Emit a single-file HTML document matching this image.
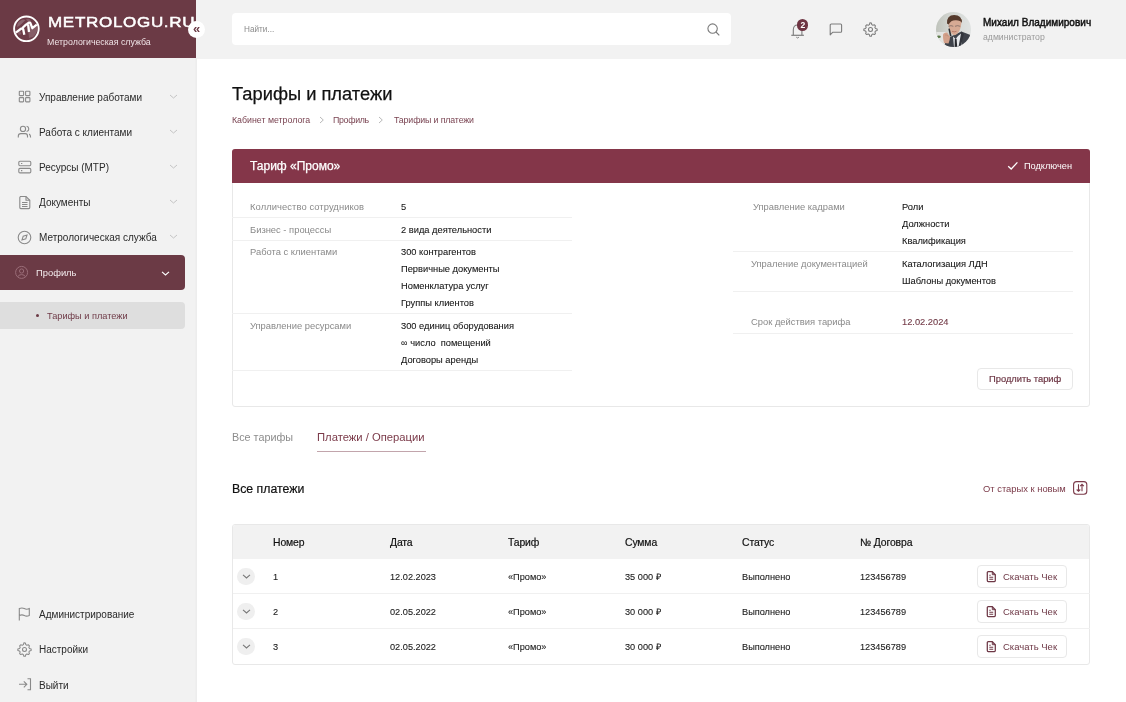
<!DOCTYPE html>
<html><head><meta charset="utf-8">
<style>
*{margin:0;padding:0;box-sizing:border-box}
html,body{width:1126px;height:702px;overflow:hidden;background:#fff;font-family:"Liberation Sans",sans-serif;color:#1c1c1c}
.a{position:absolute}
.t{position:absolute;white-space:nowrap;line-height:20px;height:20px;will-change:transform}
svg{position:absolute;overflow:visible}
#sb{left:0;top:0;width:196.5px;height:702px;background:#f2f2f2}
#sbh{left:0;top:0;width:196.4px;height:58.3px;background:#6b3a45}
#tb{left:196.4px;top:0;width:930px;height:58.6px;background:#f2f2f2}
.nav{font-size:10px;color:#2a2a2a}
.lbl{font-size:9.4px;color:#8a8a8a}
.val{font-size:9.3px;color:#141414;-webkit-text-stroke:0.08px #141414}
.sep{position:absolute;height:1px;background:#f0f0f0}
.th{font-size:10.4px;color:#111;-webkit-text-stroke:0.2px #111;letter-spacing:-0.12px}
.td{font-size:9.2px;color:#1a1a1a;-webkit-text-stroke:0.1px #1a1a1a}
.btn{position:absolute;border:1px solid #e8e8e8;border-radius:4px;background:#fff}
.mar{color:#7b3a49}
</style></head><body>
<div id="sb" class="a"></div>
<div id="sbh" class="a"></div>
<div id="tb" class="a"></div>
<!-- sidebar edge -->
<div class="a" style="left:194.5px;top:58.3px;width:2px;height:644px;background:linear-gradient(90deg,#f0f0f0,#ececec)"></div>

<!-- logo -->
<svg style="left:10px;top:13px" width="32" height="32" viewBox="0 0 32 32">
  <circle cx="16.4" cy="15.85" r="12.3" fill="#6d3c48" stroke="#fff" stroke-width="1.9"/>
  <path d="M7.5 11 Q9 7.5 13 6.5 L15.5 7 L12 10.5 L9 13 L7 14 Z" fill="#a08089" opacity=".6"/>
  <path d="M16 6 L19 5.8 L21 8 L18 9 Z" fill="#a08089" opacity=".45"/>
  <path d="M18 14 L20.5 13.5 L22.5 16 L26.5 13 L27.5 15 Q27 21 23 24 L19 25 L18.5 20 Z" fill="#9a7882" opacity=".55"/>
  <path d="M7 19.5 L10 18 L11.5 21 L9 22 Z" fill="#9a7882" opacity=".5"/>
  <path d="M5.8 19.6 L11 15.8 Q12.6 14.6 13.2 16.2 L14.3 21.8 M12.4 15 L16 11.6 Q17.6 10.4 18.2 12 L19 19 M17 11 L18.6 9.8 Q20 9 20.6 10.6 L22.3 15.2 L26.8 11.6" fill="none" stroke="#fff" stroke-width="2.3" stroke-linejoin="round"/>
</svg>
<div class="t" style="left:47.8px;top:12.2px;font-size:15px;color:#fff;-webkit-text-stroke:0.5px #fff;letter-spacing:0.6px;transform:scaleX(1.135);transform-origin:0 0">METROLOGU.RU</div>
<div class="t" style="left:47px;top:31.9px;font-size:8.8px;color:#efe3e6">Метрологическая служба</div>
<!-- collapse button -->
<div class="a" style="left:188px;top:21px;width:17px;height:17px;border-radius:50%;background:#fff"></div>
<div class="t" style="left:192.6px;top:18.6px;font-size:13px;font-weight:bold;color:#6b3a45;line-height:20px">«</div>

<!-- search -->
<div class="a" style="left:232px;top:13px;width:499px;height:32px;background:#fff;border-radius:4px"></div>
<div class="t" style="left:244px;top:20.1px;font-size:8.2px;color:#8c8c8c">Найти...</div>
<svg style="left:707px;top:23px" width="13" height="13" viewBox="0 0 13 13"><circle cx="5.6" cy="5.6" r="4.7" fill="none" stroke="#7a7a7a" stroke-width="1.1"/><path d="M9 9 L12.3 12.3" stroke="#7a7a7a" stroke-width="1.1"/></svg>

<!-- top icons -->
<svg style="left:790px;top:20px" width="16" height="20" viewBox="0 0 16 20">
  <path d="M3.3 15 V10 Q3.3 5 7.6 5 Q11.9 5 11.9 10 V15" fill="none" stroke="#7c7c7c" stroke-width="1.1"/>
  <path d="M1.3 15.3 H13.9" stroke="#7c7c7c" stroke-width="1.2"/>
  <path d="M6.3 17.2 L7.6 18 L8.9 17.2" fill="none" stroke="#7c7c7c" stroke-width="1"/>
</svg>
<div class="a" style="left:796.7px;top:19px;width:11.6px;height:11.6px;border-radius:50%;background:#6e3543"></div>
<div class="t" style="left:796.7px;top:14.8px;width:11.6px;text-align:center;font-size:8.6px;font-weight:bold;color:#fff">2</div>
<svg style="left:829px;top:23px" width="14" height="14" viewBox="0 0 14 14">
  <path d="M1.2 11.8 V2.2 Q1.2 1 2.4 1 H11.6 Q12.6 1 12.6 2.2 V8.2 Q12.6 9.3 11.6 9.3 H3.6 Z" fill="none" stroke="#7c7c7c" stroke-width="1.1" stroke-linejoin="round"/>
</svg>
<svg style="left:862.5px;top:21.5px" width="15" height="15" viewBox="0 0 24 24">
  <path d="M12 1.8 L14.2 2.2 L14.9 4.9 L16.6 5.9 L19.2 5.1 L20.7 6.8 L19.9 9.4 L20.9 11.1 L23.5 11.8 L23.5 14.2 L20.9 14.9 L19.9 16.6 L20.7 19.2 L19.2 20.7 L16.6 19.9 L14.9 20.9 L14.2 23.5 L11.8 23.5 L11.1 20.9 L9.4 19.9 L6.8 20.7 L5.1 19.2 L5.9 16.6 L4.9 14.9 L2.2 14.2 L2.2 11.8 L4.9 11.1 L5.9 9.4 L5.1 6.8 L6.8 5.1 L9.4 5.9 L11.1 4.9 Z" transform="translate(-0.85,-0.65)" fill="none" stroke="#7c7c7c" stroke-width="1.7" stroke-linejoin="round"/>
  <circle cx="12" cy="12" r="3.2" fill="none" stroke="#7c7c7c" stroke-width="1.7"/>
</svg>

<!-- avatar -->
<svg style="left:936px;top:11.7px" width="35" height="35" viewBox="0 0 35 35">
  <defs><clipPath id="av"><circle cx="17.5" cy="17.5" r="17.5"/></clipPath>
  <linearGradient id="avbg" x1="0" y1="0" x2="1" y2="0"><stop offset="0" stop-color="#bfc3bb"/><stop offset=".4" stop-color="#d3d6d2"/><stop offset="1" stop-color="#dfe2e1"/></linearGradient></defs>
  <g clip-path="url(#av)">
    <rect width="35" height="35" fill="url(#avbg)"/>
    <rect x="0" y="20" width="11" height="15" fill="#e4e5e3"/>
    <ellipse cx="2.8" cy="24.8" rx="2" ry="1.2" fill="#5d7a4a"/>
    <path d="M8 35 L10 27.5 L16.5 23.8 L25.4 19.5 L34.5 23 L35 35 Z" fill="#3e424a"/>
    <path d="M17 24.5 L19.6 27 L22 24 L25.2 21.5 L25.5 35 L18 35 Z" fill="#e7e9ec"/>
    <path d="M18.8 26.8 L20.6 26.8 L21.2 35 L18.6 35 Z" fill="#25272c"/>
    <path d="M25.4 19.5 L28 22 L24.5 35 L22.5 35 Z" fill="#33363d"/>
    <path d="M12.3 7 Q12 21.5 18.2 23.2 Q25.2 22 25.6 7 Z" fill="#d6aa94"/>
    <path d="M12.5 14.3 Q15 13 17.3 14.3 M19 14.3 Q21.5 13 24.2 14.3" stroke="#6e5f5b" stroke-width=".7" fill="none"/>
    <path d="M16 19.3 Q18.3 20.4 20.5 19.3" stroke="#b0705f" stroke-width=".8" fill="none"/>
    <path d="M11 11.5 Q10.5 3.2 18.2 3 Q26 3 26 11 Q24.5 8.3 20 8.2 Q15 7.8 12.6 12.6 Z" fill="#553a2c"/>
    <path d="M8 31 Q6.5 25 7.2 22 Q8.5 20 11 20.5 L14 24.8 Q14 28.5 12.5 31.5 Z" fill="#d3a18b"/><path d="M9 23 Q11 22.5 12.5 24.5" stroke="#b88570" stroke-width=".6" fill="none"/>
    <path d="M12.3 16.8 L13.8 16.5 L15.6 24 L14 24.5 Z" fill="#2f3034"/>
  </g>
</svg>
<div class="t" style="left:983px;top:13.3px;font-size:10px;color:#111;-webkit-text-stroke:0.45px #111;letter-spacing:0.02px">Михаил Владимирович</div>
<div class="t" style="left:983px;top:26.5px;font-size:8.7px;color:#9a9a9a">администратор</div>

<!-- sidebar nav -->
<svg style="left:18px;top:90px" width="14" height="14" viewBox="0 0 14 14" fill="none" stroke="#8a8a8a" stroke-width="1.1">
  <rect x="1.3" y="1.3" width="4.3" height="4.3" rx=".6"/><rect x="7.6" y="1.3" width="4.3" height="4.3" rx=".6"/>
  <rect x="1.3" y="7.6" width="4.3" height="4.3" rx=".6"/><rect x="7.6" y="7.6" width="4.3" height="4.3" rx=".6"/>
</svg>
<div class="t nav" style="left:39px;top:87.7px">Управление работами</div>
<svg style="left:17px;top:125px" width="16" height="14" viewBox="0 0 16 14" fill="none" stroke="#8a8a8a" stroke-width="1.1">
  <circle cx="6" cy="3.9" r="2.6"/><path d="M1.3 12.6 V11 Q1.3 8.6 3.8 8.6 H8.3 Q10.5 8.6 10.5 11 V12.6"/>
  <path d="M9.6 1.3 Q11.8 1.8 11.8 3.9 Q11.8 6 9.6 6.5"/><path d="M12.2 9 Q13.6 10 13.6 12.6"/>
</svg>
<div class="t nav" style="left:39px;top:122.7px">Работа с клиентами</div>
<svg style="left:18px;top:160px" width="14" height="15" viewBox="0 0 14 15" fill="none" stroke="#8a8a8a" stroke-width="1.1">
  <rect x="0.8" y="1.3" width="12" height="4.5" rx="1.2"/><rect x="0.8" y="8.4" width="12" height="4.5" rx="1.2"/>
  <path d="M3 3.5 H4.3 M3 10.6 H4.3"/>
</svg>
<div class="t nav" style="left:39px;top:157.7px">Ресурсы (МТР)</div>
<svg style="left:18px;top:195px" width="14" height="15" viewBox="0 0 14 15" fill="none" stroke="#8a8a8a" stroke-width="1.1">
  <path d="M2 1.5 H8 L11.8 5.3 V12.6 Q11.8 13.6 10.8 13.6 H2.8 Q1.8 13.6 1.8 12.6 V2.5 Q1.8 1.5 2.8 1.5 Z"/>
  <path d="M8 1.5 V5.3 H11.8"/><path d="M4 7.5 H9.5 M4 9.5 H9.5 M4 11.5 H9.5"/>
</svg>
<div class="t nav" style="left:39px;top:192.7px">Документы</div>
<svg style="left:17px;top:230px" width="15" height="15" viewBox="0 0 15 15" fill="none" stroke="#8a8a8a" stroke-width="1.1">
  <circle cx="7.5" cy="7.5" r="6.3"/><path d="M10 5 L8.8 8.8 L5 10 L6.2 6.2 Z"/>
</svg>
<div class="t nav" style="left:39px;top:227.7px">Метрологическая служба</div>
<!-- chevrons -->
<svg style="left:169px;top:94px" width="9" height="5" viewBox="0 0 9 5"><path d="M1 1 L4.5 4 L8 1" fill="none" stroke="#c4c4c4" stroke-width="1"/></svg>
<svg style="left:169px;top:129px" width="9" height="5" viewBox="0 0 9 5"><path d="M1 1 L4.5 4 L8 1" fill="none" stroke="#c4c4c4" stroke-width="1"/></svg>
<svg style="left:169px;top:164px" width="9" height="5" viewBox="0 0 9 5"><path d="M1 1 L4.5 4 L8 1" fill="none" stroke="#c4c4c4" stroke-width="1"/></svg>
<svg style="left:169px;top:199px" width="9" height="5" viewBox="0 0 9 5"><path d="M1 1 L4.5 4 L8 1" fill="none" stroke="#c4c4c4" stroke-width="1"/></svg>
<svg style="left:169px;top:234px" width="9" height="5" viewBox="0 0 9 5"><path d="M1 1 L4.5 4 L8 1" fill="none" stroke="#c4c4c4" stroke-width="1"/></svg>

<!-- profile active -->
<div class="a" style="left:0;top:255px;width:185px;height:35px;background:#6b3a45;border-radius:0 4px 4px 0"></div>
<svg style="left:15px;top:266px" width="14" height="14" viewBox="0 0 14 14" fill="none" stroke="#9a6d78" stroke-width="1">
  <circle cx="6.6" cy="6.4" r="6"/><circle cx="6.6" cy="5" r="2.1"/><path d="M2.8 10.8 Q3.5 8.6 6.6 8.6 Q9.7 8.6 10.4 10.8"/>
</svg>
<div class="t" style="left:36px;top:263px;font-size:9.4px;color:#f3ecee">Профиль</div>
<svg style="left:161px;top:270.5px" width="9" height="5" viewBox="0 0 9 5"><path d="M1 0.8 L4.5 4 L8 0.8" fill="none" stroke="#fff" stroke-width="1.1"/></svg>
<!-- sub item -->
<div class="a" style="left:0;top:302px;width:185px;height:27px;background:#dedede;border-radius:0 4px 4px 0"></div>
<div class="a" style="left:35.5px;top:314.3px;width:3px;height:3px;border-radius:50%;background:#6b3a45"></div>
<div class="t mar" style="left:47px;top:305.7px;font-size:9.2px;color:#6f3b48">Тарифы и платежи</div>

<!-- bottom nav -->
<svg style="left:18px;top:607px" width="14" height="15" viewBox="0 0 14 15" fill="none" stroke="#8a8a8a" stroke-width="1.1">
  <path d="M1.3 13.5 V1.6 Q4 0.4 6.3 1.6 Q8.6 2.8 11.3 1.6 V8.5 Q8.6 9.7 6.3 8.5 Q4 7.3 1.3 8.5"/>
</svg>
<div class="t nav" style="left:38.7px;top:605.2px">Администрирование</div>
<svg style="left:17px;top:641.5px" width="15" height="15" viewBox="0 0 24 24">
  <path d="M12 1.8 L14.2 2.2 L14.9 4.9 L16.6 5.9 L19.2 5.1 L20.7 6.8 L19.9 9.4 L20.9 11.1 L23.5 11.8 L23.5 14.2 L20.9 14.9 L19.9 16.6 L20.7 19.2 L19.2 20.7 L16.6 19.9 L14.9 20.9 L14.2 23.5 L11.8 23.5 L11.1 20.9 L9.4 19.9 L6.8 20.7 L5.1 19.2 L5.9 16.6 L4.9 14.9 L2.2 14.2 L2.2 11.8 L4.9 11.1 L5.9 9.4 L5.1 6.8 L6.8 5.1 L9.4 5.9 L11.1 4.9 Z" transform="translate(-0.85,-0.65)" fill="none" stroke="#8a8a8a" stroke-width="1.7" stroke-linejoin="round"/>
  <circle cx="12" cy="12" r="3.2" fill="none" stroke="#8a8a8a" stroke-width="1.7"/>
</svg>
<div class="t nav" style="left:38.7px;top:640.2px">Настройки</div>
<svg style="left:18px;top:678px" width="14" height="13" viewBox="0 0 14 13" fill="none" stroke="#8a8a8a" stroke-width="1.1">
  <path d="M1 6.3 H8.5 M5.8 3.3 L8.8 6.3 L5.8 9.3"/><path d="M9.5 0.8 H12.5 V11.8 H9.5"/>
</svg>
<div class="t nav" style="left:38.7px;top:675.8px">Выйти</div>

<!-- MAIN -->
<div class="t" style="left:231.5px;top:83.8px;font-size:18.3px;color:#111;-webkit-text-stroke:0.25px #111">Тарифы и платежи</div>
<div class="t" style="left:231.5px;top:109.8px;font-size:8.8px;color:#7a4452">Кабинет метролога</div>
<svg style="left:319px;top:116px" width="6" height="8" viewBox="0 0 6 8"><path d="M1 1 L4.3 4 L1 7" fill="none" stroke="#b0b0b0" stroke-width="0.9"/></svg>
<div class="t" style="left:333px;top:109.8px;font-size:8.8px;color:#7a4452;letter-spacing:-0.3px">Профиль</div>
<svg style="left:378px;top:116px" width="6" height="8" viewBox="0 0 6 8"><path d="M1 1 L4.3 4 L1 7" fill="none" stroke="#b0b0b0" stroke-width="0.9"/></svg>
<div class="t" style="left:394px;top:109.8px;font-size:8.8px;color:#7a4452;letter-spacing:-0.13px">Тарифиы и платежи</div>

<!-- card -->
<div class="a" style="left:231.7px;top:149px;width:858.8px;height:257.5px;border:1px solid #e8e8e8;border-radius:3px;background:#fff"></div>
<div class="a" style="left:231.7px;top:149px;width:858.8px;height:34px;background:#843649;border-radius:3px 3px 0 0"></div>
<div class="t" style="left:249.8px;top:155.5px;font-size:12px;color:#fff;-webkit-text-stroke:0.25px #fff">Тариф «Промо»</div>
<svg style="left:1007px;top:161px" width="12" height="10" viewBox="0 0 12 10"><path d="M1.2 5.2 L4.2 8 L10.4 1.4" fill="none" stroke="#fff" stroke-width="1.3"/></svg>
<div class="t" style="left:1023.7px;top:156px;font-size:9.2px;color:#fff">Подключен</div>

<!-- left rows -->
<div class="t lbl" style="left:249.7px;top:197px;letter-spacing:0.08px">Колличество сотрудников</div>
<div class="t val" style="left:400.6px;top:197px">5</div>
<div class="sep" style="left:232px;top:217px;width:340px"></div>
<div class="t lbl" style="left:249.7px;top:219.7px">Бизнес - процессы</div>
<div class="t val" style="left:400.6px;top:219.7px">2 вида деятельности</div>
<div class="sep" style="left:232px;top:240px;width:340px"></div>
<div class="t lbl" style="left:249.7px;top:242.4px">Работа с клиентами</div>
<div class="t val" style="left:400.6px;top:242.4px">300 контрагентов</div>
<div class="t val" style="left:400.6px;top:259.3px">Первичные документы</div>
<div class="t val" style="left:400.6px;top:276.2px">Номенклатура услуг</div>
<div class="t val" style="left:400.6px;top:292.9px">Группы клиентов</div>
<div class="sep" style="left:232px;top:313px;width:340px"></div>
<div class="t lbl" style="left:249.7px;top:315.7px">Управление ресурсами</div>
<div class="t val" style="left:400.6px;top:315.7px">300 единиц оборудования</div>
<div class="t val" style="left:400.6px;top:333px">∞ число&nbsp; помещений</div>
<div class="t val" style="left:400.6px;top:349.6px">Договоры аренды</div>
<div class="sep" style="left:232px;top:370px;width:340px"></div>

<!-- right rows -->
<div class="t lbl" style="left:753.3px;top:196.9px">Управление кадрами</div>
<div class="t val" style="left:901.8px;top:196.9px">Роли</div>
<div class="t val" style="left:901.8px;top:214px">Должности</div>
<div class="t val" style="left:901.8px;top:230.9px">Квалификация</div>
<div class="sep" style="left:733px;top:251px;width:340px"></div>
<div class="t lbl" style="left:751px;top:253.6px">Упраление документацией</div>
<div class="t val" style="left:901.8px;top:253.6px">Каталогизация ЛДН</div>
<div class="t val" style="left:901.8px;top:270.6px">Шаблоны документов</div>
<div class="sep" style="left:733px;top:290.5px;width:340px"></div>
<div class="t lbl" style="left:751px;top:312.3px">Срок действия тарифа</div>
<div class="t val" style="left:901.8px;top:312.3px;color:#7b3a49">12.02.2024</div>
<div class="sep" style="left:733px;top:332.5px;width:340px"></div>
<div class="btn" style="left:977px;top:367.5px;width:96px;height:22px"></div>
<div class="t" style="left:988.7px;top:368.5px;font-size:9.35px;color:#6e3846;-webkit-text-stroke:0.2px #6e3846">Продлить тариф</div>

<!-- tabs -->
<div class="t" style="left:232px;top:426.6px;font-size:10.8px;color:#8d8d8d">Все тарифы</div>
<div class="t" style="left:317.4px;top:426.6px;font-size:11.25px;color:#7b3a49">Платежи / Операции</div>
<div class="a" style="left:317px;top:451px;width:109px;height:1.4px;background:#c2a5ac"></div>

<div class="t" style="left:232px;top:478.5px;font-size:12.3px;color:#111;-webkit-text-stroke:0.2px #111">Все платежи</div>
<div class="t" style="left:983.3px;top:478.6px;font-size:9.4px;color:#7b3a49">От старых к новым</div>
<svg style="left:1073px;top:481px" width="15" height="14" viewBox="0 0 15 14" fill="none" stroke="#7b3a49" stroke-width="1.1">
  <rect x="0.6" y="0.6" width="13.2" height="12.6" rx="3"/>
  <path d="M5.5 3.3 V10.3 M3.7 8.5 L5.5 10.3 L7.3 8.5"/><path d="M9 10.3 V3.3 M7.2 5.1 L9 3.3 L10.8 5.1"/>
</svg>

<!-- table -->
<div class="a" style="left:231.7px;top:524px;width:858.8px;height:140.6px;border:1px solid #e8e8e8;border-radius:3px;background:#fff"></div>
<div class="a" style="left:232.7px;top:525px;width:856.8px;height:33.5px;background:#f2f2f2;border-radius:2px 2px 0 0"></div>
<div class="t th" style="left:272.6px;top:532.5px">Номер</div>
<div class="t th" style="left:390px;top:532.5px">Дата</div>
<div class="t th" style="left:507.8px;top:532.5px">Тариф</div>
<div class="t th" style="left:625px;top:532.5px">Сумма</div>
<div class="t th" style="left:742.3px;top:532.5px">Статус</div>
<div class="t th" style="left:859.5px;top:532.5px">№ Договра</div>

<div class="sep" style="left:233px;top:593.3px;width:857px;background:#f0f0f0"></div>
<div class="sep" style="left:233px;top:628.3px;width:857px;background:#f0f0f0"></div>

<!-- rows -->
<div class="a" style="left:237.3px;top:567.8px;width:17.6px;height:17.6px;border-radius:50%;background:#efefef"></div>
<svg style="left:242px;top:574.1px" width="9" height="5" viewBox="0 0 9 5"><path d="M1 0.8 L4.5 4 L8 0.8" fill="none" stroke="#777" stroke-width="1.05"/></svg>
<div class="t td" style="left:272.6px;top:566.6px">1</div>
<div class="t td" style="left:390px;top:566.6px">12.02.2023</div>
<div class="t td" style="left:507.8px;top:566.6px">«Промо»</div>
<div class="t td" style="left:625px;top:566.6px">35 000 ₽</div>
<div class="t td" style="left:742.3px;top:566.6px">Выполнено</div>
<div class="t td" style="left:859.5px;top:566.6px">123456789</div>
<div class="btn" style="left:976.6px;top:564.6px;width:90px;height:23px"></div>
<svg style="left:986px;top:571.0px" width="10" height="11" viewBox="0 0 10 11" fill="none" stroke="#6e3846" stroke-width="1.25"><path d="M1.3 1.6 Q1.3 0.7 2.2 0.7 H6.3 L9.3 3.7 V9.6 Q9.3 10.5 8.4 10.5 H2.2 Q1.3 10.5 1.3 9.6 Z"/><path d="M6.3 0.7 V3.7 H9.3" stroke-width="1"/><path d="M3.3 4.3 H4.7 M3.3 6.3 H7.2 M3.3 8.3 H7.2" stroke-width="1.1"/></svg>
<div class="t" style="left:1003.1px;top:566.6px;font-size:9.5px;color:#6e3846">Скачать Чек</div>
<div class="a" style="left:237.3px;top:602.8px;width:17.6px;height:17.6px;border-radius:50%;background:#efefef"></div>
<svg style="left:242px;top:609.1px" width="9" height="5" viewBox="0 0 9 5"><path d="M1 0.8 L4.5 4 L8 0.8" fill="none" stroke="#777" stroke-width="1.05"/></svg>
<div class="t td" style="left:272.6px;top:601.6px">2</div>
<div class="t td" style="left:390px;top:601.6px">02.05.2022</div>
<div class="t td" style="left:507.8px;top:601.6px">«Промо»</div>
<div class="t td" style="left:625px;top:601.6px">30 000 ₽</div>
<div class="t td" style="left:742.3px;top:601.6px">Выполнено</div>
<div class="t td" style="left:859.5px;top:601.6px">123456789</div>
<div class="btn" style="left:976.6px;top:599.6px;width:90px;height:23px"></div>
<svg style="left:986px;top:606.0px" width="10" height="11" viewBox="0 0 10 11" fill="none" stroke="#6e3846" stroke-width="1.25"><path d="M1.3 1.6 Q1.3 0.7 2.2 0.7 H6.3 L9.3 3.7 V9.6 Q9.3 10.5 8.4 10.5 H2.2 Q1.3 10.5 1.3 9.6 Z"/><path d="M6.3 0.7 V3.7 H9.3" stroke-width="1"/><path d="M3.3 4.3 H4.7 M3.3 6.3 H7.2 M3.3 8.3 H7.2" stroke-width="1.1"/></svg>
<div class="t" style="left:1003.1px;top:601.6px;font-size:9.5px;color:#6e3846">Скачать Чек</div>
<div class="a" style="left:237.3px;top:637.8px;width:17.6px;height:17.6px;border-radius:50%;background:#efefef"></div>
<svg style="left:242px;top:644.1px" width="9" height="5" viewBox="0 0 9 5"><path d="M1 0.8 L4.5 4 L8 0.8" fill="none" stroke="#777" stroke-width="1.05"/></svg>
<div class="t td" style="left:272.6px;top:636.6px">3</div>
<div class="t td" style="left:390px;top:636.6px">02.05.2022</div>
<div class="t td" style="left:507.8px;top:636.6px">«Промо»</div>
<div class="t td" style="left:625px;top:636.6px">30 000 ₽</div>
<div class="t td" style="left:742.3px;top:636.6px">Выполнено</div>
<div class="t td" style="left:859.5px;top:636.6px">123456789</div>
<div class="btn" style="left:976.6px;top:634.6px;width:90px;height:23px"></div>
<svg style="left:986px;top:641.0px" width="10" height="11" viewBox="0 0 10 11" fill="none" stroke="#6e3846" stroke-width="1.25"><path d="M1.3 1.6 Q1.3 0.7 2.2 0.7 H6.3 L9.3 3.7 V9.6 Q9.3 10.5 8.4 10.5 H2.2 Q1.3 10.5 1.3 9.6 Z"/><path d="M6.3 0.7 V3.7 H9.3" stroke-width="1"/><path d="M3.3 4.3 H4.7 M3.3 6.3 H7.2 M3.3 8.3 H7.2" stroke-width="1.1"/></svg>
<div class="t" style="left:1003.1px;top:636.6px;font-size:9.5px;color:#6e3846">Скачать Чек</div>
</body></html>
